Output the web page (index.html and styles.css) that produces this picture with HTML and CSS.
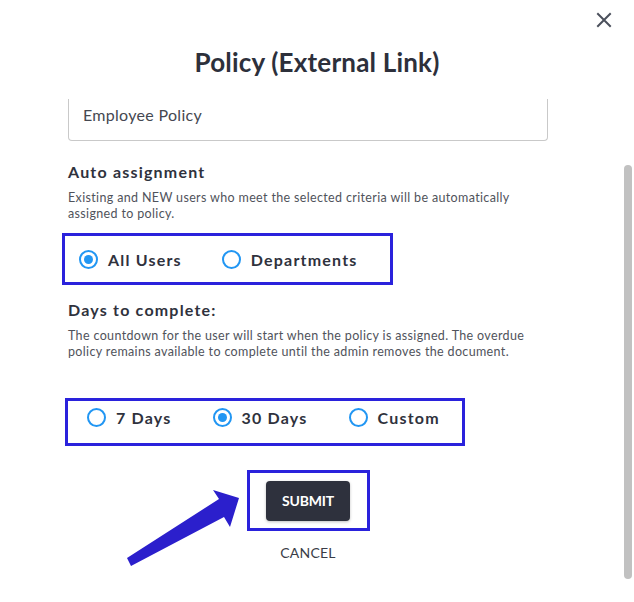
FILE: index.html
```html
<!DOCTYPE html>
<html>
<head>
<meta charset="utf-8">
<link rel="stylesheet" href="styles.css">
</head>
<body>
<div class="modal">
  <button class="close" aria-label="Close">
    <svg width="16" height="16" viewBox="0 0 16 16"><path d="M2 2L14 14M14 2L2 14" stroke="#4b505c" stroke-width="2" stroke-linecap="square"/></svg>
  </button>
  <h1 class="title">Policy (External Link)</h1>
  <div class="body">
    <div class="input">Employee Policy</div>
    <h2 class="label">Auto assignment</h2>
    <p class="desc">Existing and NEW users who meet the selected criteria will be automatically assigned to policy.</p>
    <div class="group group-assign">
      <span class="radio"><span class="dot on"></span>All Users</span>
      <span class="radio"><span class="dot"></span>Departments</span>
    </div>
    <h2 class="label label-days">Days to complete:</h2>
    <p class="desc">The countdown for the user will start when the policy is assigned. The overdue policy remains available to complete until the admin removes the document.</p>
    <div class="group group-days">
      <span class="radio"><span class="dot"></span>7 Days</span>
      <span class="radio"><span class="dot on"></span>30 Days</span>
      <span class="radio"><span class="dot"></span>Custom</span>
    </div>
    <div class="actions">
      <div class="submit-frame"><button class="submit">SUBMIT</button></div>
      <button class="cancel">CANCEL</button>
    </div>
  </div>
  <div class="scrollbar"></div>
  <svg class="arrow" width="140" height="90" viewBox="0 0 140 90">
    <path d="M7 78 L11 86 L104 37 L110 47 L119 18 L93 10 L99 19 Z" fill="#2b1fcc"/>
  </svg>
</div>
</body>
</html>
```
FILE: styles.css
```css
* { box-sizing: border-box; }
html, body { margin: 0; padding: 0; background: #fff; }
body { font-family: Lato, "Open Sans", sans-serif; color: #2f323d; }
.modal { position: relative; width: 634px; height: 602px; overflow: hidden; }
.close { position: absolute; left: 596px; top: 12px; width: 16px; height: 16px; padding: 0; border: 0; background: none; }
.close svg { display: block; }
.title { margin: 0; padding-top: 47px; text-align: center; font-size: 26px; font-weight: 700; color: #2d303b; line-height: 30px; letter-spacing: 0.2px; }
.body { width: 480px; margin: 22px 0 0 68px; }
.input { height: 42px; border: 1px solid #c9c9c9; border-top: 0; border-radius: 0 0 4px 4px; padding: 6px 14px 0; font-size: 16px; color: #454851; line-height: 20px; letter-spacing: 0.3px; }
.label { margin: 22px 0 0; font-size: 16px; font-weight: 700; letter-spacing: 1.2px; color: #2f323d; line-height: 18px; }
.desc { margin: 9px 0 0; font-size: 12.5px; line-height: 16px; color: #50535b; letter-spacing: 0.35px; }
.group { display: flex; align-items: center; border: 3px solid #2a22dc; }
.group-assign { width: 331px; height: 52px; margin: 11px 0 0 -6px; padding-left: 14px; gap: 40px; }
.group-days { width: 400px; height: 48px; margin: 38px 0 0 -3px; padding: 0 0 9px 19px; gap: 41px; }
.label-days { margin-top: 16px; }
.radio { display: inline-flex; align-items: center; gap: 10px; font-size: 16px; font-weight: 700; letter-spacing: 1.2px; color: #2f323d; }
.dot { width: 19px; height: 19px; border: 2px solid #2196f3; border-radius: 50%; display: inline-flex; align-items: center; justify-content: center; }
.dot.on::after { content: ""; width: 9px; height: 9px; border-radius: 50%; background: #2196f3; }
.actions { display: flex; flex-direction: column; align-items: center; margin-top: 24px; }
.submit-frame { width: 123px; height: 61px; border: 3px solid #2a22dc; display: flex; align-items: center; justify-content: center; }
.submit { width: 84px; height: 40px; border: 0; border-radius: 4px; background: #2e313d; color: #fff; font-family: Lato, sans-serif; font-size: 14px; font-weight: 700; letter-spacing: -0.2px; box-shadow: 0 1px 3px rgba(0,0,0,0.25); }
.cancel { margin-top: 13px; border: 0; background: none; padding: 0; font-family: Lato, sans-serif; font-size: 14px; color: #3a3d47; letter-spacing: 0.2px; }
.scrollbar { position: absolute; left: 624px; top: 165px; width: 8px; height: 414px; border-radius: 4px; background: #c1c1c1; }
.arrow { position: absolute; left: 120px; top: 480px; }
```
